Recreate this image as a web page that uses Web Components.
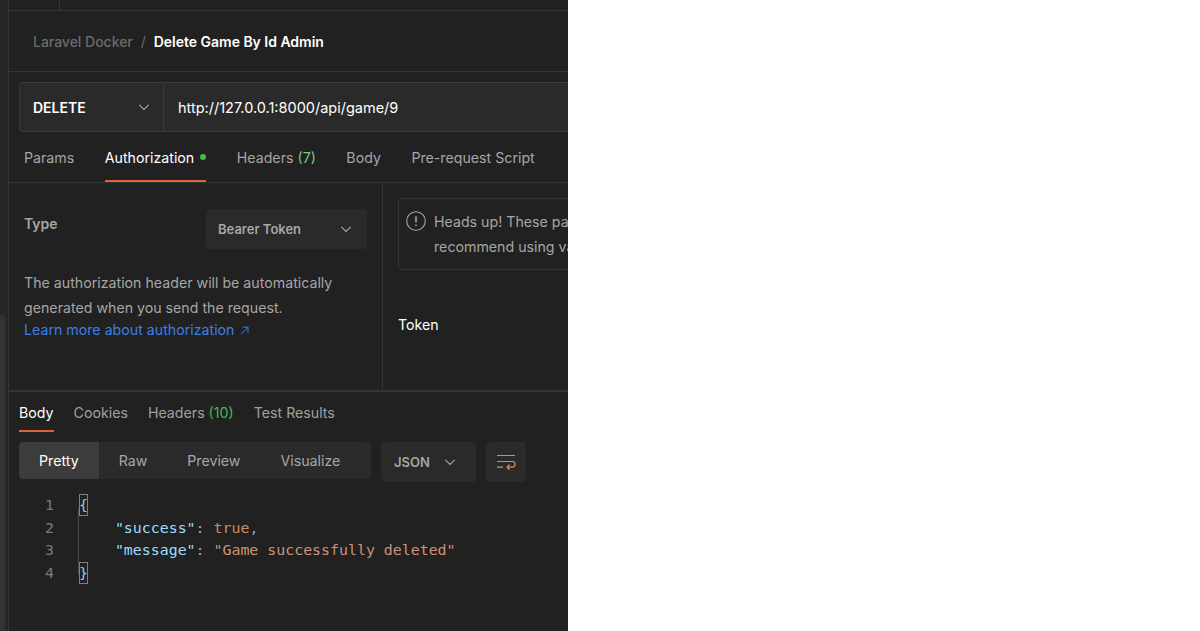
<!DOCTYPE html>
<html><head><meta charset="utf-8">
<style>
html,body{margin:0;padding:0;background:#fff;height:100%;overflow:hidden}
body{font-family:Inter,"Liberation Sans",sans-serif}
</style></head><body>
<pm-app></pm-app>
<script>
const chev='<svg width="12" height="12" viewBox="0 0 12 12" fill="none" stroke="currentColor" stroke-width="1.1"><path d="M1.3 3.8 6 8.5l4.7-4.7"/></svg>';
function def(name,css,html){
  customElements.define(name,class extends HTMLElement{
    constructor(){super();const r=this.attachShadow({mode:'open'});r.innerHTML='<style>'+css+'</style>'+html;}
  });
}
def('pm-top-strip',`:host{display:flex;height:10px;border-bottom:1px solid #353535;box-sizing:content-box}
 i{display:block;width:50px;border-right:1px solid #353535}`,`<i></i>`);
def('pm-crumbs',`:host{display:flex;align-items:center;height:60px;padding-left:24px;border-bottom:1px solid #353535;font-size:14px;font-weight:600;color:#fff;letter-spacing:-.02px}
 .p{color:#6b6b6b;font-weight:500}.s{color:#6b6b6b;margin:0 8px;font-weight:400}`,
 `<span class="p">Laravel Docker</span><span class="s">/</span><span>Delete Game By Id Admin</span>`);
def('pm-url-bar',`:host{display:flex;height:50px;margin:10px 0 0 10px;box-sizing:border-box;background:#2a2a2a;border:1px solid #3a3a3a;border-right:0;border-radius:4px 0 0 4px;color:#fff;font-size:14px}
 .m{display:flex;align-items:center;justify-content:space-between;width:144px;box-sizing:border-box;padding:0 13px;border-right:1px solid #3a3a3a;font-weight:600}
 .m svg{color:#a6a6a6}
 .u{display:flex;align-items:center;padding-left:14px;flex:1;font-size:14.5px}`,
 `<div class="m"><span>DELETE</span>${chev}</div><div class="u">http://127.0.0.1:8000/api/game/9</div>`);
def('pm-tab',`:host{display:flex;align-items:center;height:100%;box-sizing:border-box;position:relative;color:var(--tab-color,#a6a6a6);font-size:var(--tab-size,14.2px);white-space:nowrap}
 :host([active]){color:#fff}
 :host([active])::after{content:"";position:absolute;left:0;right:0;bottom:0;height:2px;background:#f26b3a;opacity:.9}`,`<slot></slot>`);
def('pm-req-tabs',`:host{display:flex;height:51px;padding:0 0 0 15px;gap:30.5px;border-bottom:1px solid #353535;box-sizing:border-box;overflow:hidden}
 .d{display:inline-block;width:6px;height:6px;border-radius:50%;background:#49b654;margin-left:6px;position:relative;top:0}
 .n{color:#6fcf7c}`,
 `<pm-tab>Params</pm-tab><pm-tab active>Authorization<span class="d"></span></pm-tab><pm-tab>Headers&nbsp;<span class="n">(7)</span></pm-tab><pm-tab>Body</pm-tab><pm-tab>Pre-request Script</pm-tab>`);
def('pm-auth-left',`:host{display:block;width:374px;box-sizing:border-box;border-right:1px solid #353535;padding:26px 15px 0 15px;color:#a6a6a6;font-size:14px}
 .r{display:flex;justify-content:space-between;align-items:flex-start;height:61px}
 .t{font-weight:600;line-height:17px;margin-top:6px}
 .sel{display:flex;align-items:center;justify-content:space-between;width:161px;height:40px;box-sizing:border-box;padding:0 15px 0 12px;background:#2a2a2a;border-radius:4px;font-weight:600;font-size:13px;margin-right:0}
 p{margin:0;line-height:25px;font-size:14.2px}
 a{display:block;color:#3d7fe6;line-height:20px;font-size:14.2px;margin-top:0;text-decoration:none}
 svg.o{vertical-align:-1px;margin-left:1px}`,
 `<div class="r"><span class="t">Type</span><span class="sel">Bearer Token ${chev}</span></div>
 <p>The authorization header will be automatically<br>generated when you send the request.</p>
 <a>Learn more about authorization <svg class="o" width="11" height="11" viewBox="0 0 11 11" fill="none" stroke="currentColor" stroke-width="1"><path d="M2 9.2 9 2.2M3.4 2.2H9v5.6"/></svg></a>`);
def('pm-auth-right',`:host{display:block;flex:1;min-width:0;padding:15px 0 0 15px;overflow:hidden;color:#a6a6a6;font-size:14.2px}
 .n{display:flex;gap:8px;width:500px;height:72px;box-sizing:border-box;border:1px solid #353535;border-radius:4px;padding:10px 0 0 7px;line-height:25px;white-space:nowrap}
 .n svg{flex:none;margin-top:2px}
 .k{color:#fff;margin-top:46px;line-height:18px}`,
 `<div class="n"><svg width="20" height="20" viewBox="0 0 20 20" fill="none" stroke="#a6a6a6" stroke-width="1.1"><circle cx="10" cy="10" r="9.3"/><path d="M10 5.2v6.4M10 13.6v1.5" stroke-width="1.5"/></svg><div>Heads up! These parameters hold sensitive data. To keep this data secure, we<br>recommend using variables.</div></div><div class="k">Token</div>`);
def('pm-auth',`:host{display:flex;height:207px;overflow:hidden}`,`<pm-auth-left></pm-auth-left><pm-auth-right></pm-auth-right>`);
def('pm-res-tabs',`:host{display:flex;height:40px;margin-left:10px;gap:20px;--tab-size:14.2px;--tab-color:#a0a0a0}
 .n{color:#49b654}`,
 `<pm-tab active>Body</pm-tab><pm-tab>Cookies</pm-tab><pm-tab>Headers&nbsp;<span class="n">(10)</span></pm-tab><pm-tab>Test Results</pm-tab>`);
def('pm-toolbar',`:host{display:flex;align-items:flex-start;margin:10px 0 0 10px;color:#a6a6a6;font-size:14.2px}
 .seg{display:flex;height:37px;width:352px;background:#2a2a2a;border-radius:4px;overflow:hidden;align-items:center}
 .seg b{font-weight:400;display:flex;align-items:center;height:100%;padding:0 20px}
 .seg .a{background:#3c3c3c;color:#fff;border-radius:4px 0 0 4px}
 .json{display:flex;align-items:center;gap:14px;height:40px;box-sizing:border-box;margin-left:10px;padding:0 16px 0 13px;width:95px;background:#2a2a2a;border-radius:4px;font-weight:600;font-size:13px}
 .w{display:flex;align-items:center;justify-content:center;width:40px;height:40px;margin-left:10px;background:#2a2a2a;border-radius:4px}`,
 `<div class="seg"><b class="a">Pretty</b><b>Raw</b><b>Preview</b><b>Visualize</b></div><div class="json">JSON ${chev}</div>
 <div class="w"><svg width="20" height="18" viewBox="0 0 20 18" fill="none" stroke="#e08a5a" stroke-width="1.2"><path d="M1 2.5h18M1 8.5h15.2a2.8 2.8 0 0 1 0 5.7H11M1 14.2h6M13.6 11.6 11 14.2l2.6 2.6"/></svg></div>`);
def('pm-code',`:host{display:grid;grid-template-columns:45px 1fr;margin-top:12px;font:15px/22.5px "DejaVu Sans Mono","Liberation Mono",monospace;font-size:14.9px;white-space:pre;color:#a6a6a6}
 .l{text-align:right;color:#7a7a7a}
 .c{padding-left:25px;position:relative}
 .c::before{content:"";position:absolute;left:24px;top:14px;bottom:10px;width:1px;background:#4a4a4a}
 .b{display:inline-block;position:relative;color:#8ecbf0;margin-left:0;outline:1px solid #808080;outline-offset:-1px;line-height:22px;width:9px}
 .k{color:#9cdcfe}.v{color:#ce9178}.o{color:#ce8a62}`,
 `<div class="l">1
2
3
4</div><div class="c"><span class="b">{</span>
    <span class="k">"success"</span>: <span class="o">true</span>,
    <span class="k">"message"</span>: <span class="v">"Game successfully deleted"</span>
<span class="b">}</span></div>`);
def('pm-response',`:host{display:block;border-top:2px solid #353535}`,`<pm-res-tabs></pm-res-tabs><pm-toolbar></pm-toolbar><pm-code></pm-code>`);
def('pm-main',`:host{display:block;flex:1;min-width:0;border-left:1px solid #353535;overflow:hidden}`,
 `<pm-top-strip></pm-top-strip><pm-crumbs></pm-crumbs><pm-url-bar></pm-url-bar><pm-req-tabs></pm-req-tabs><pm-auth></pm-auth><pm-response></pm-response>`);
def('pm-rail',`:host{display:block;width:8px;flex:none;background:#262626;padding-top:315px;box-sizing:border-box}
 i{display:block;width:5px;height:316px;background:#333;border-radius:0 3px 0 0}`,`<i></i>`);
def('pm-app',`:host{display:flex;width:568px;height:631px;background:#212121;overflow:hidden}`,`<pm-rail></pm-rail><pm-main></pm-main>`);
</script>
</body></html>
